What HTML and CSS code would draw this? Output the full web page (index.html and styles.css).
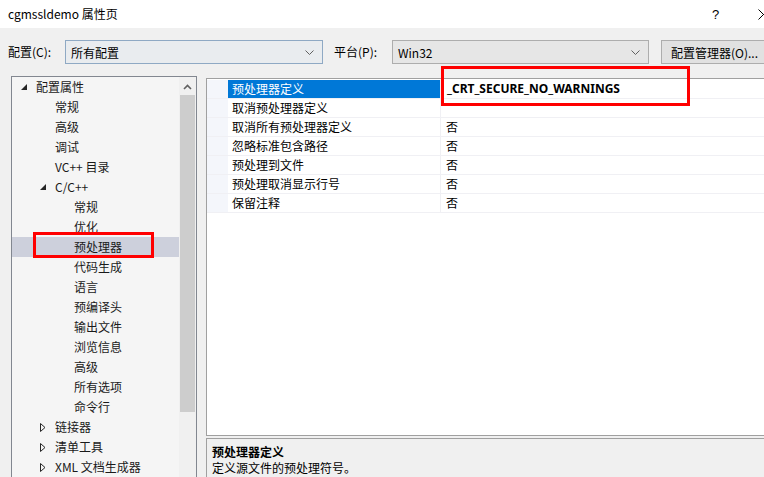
FILE: index.html
```html
<!DOCTYPE html>
<html>
<head>
  <meta charset="UTF-8">
  <title>cgmssldemo 属性页</title>
  <link rel="stylesheet" href="styles.css">
</head>
<body>
  <div class="dialog">
    <div class="titlebar">
      <span class="title">cgmssldemo 属性页</span>
      <span class="help">?</span>
      <svg class="close" width="11" height="11" viewBox="0 0 11 11"><path d="M0.5 0.5 L10.5 10.5 M10.5 0.5 L0.5 10.5" stroke="#000" stroke-width="1"/></svg>
    </div>

    <div class="toolbar">
      <span class="lbl lbl-config">配置(C):</span>
      <div class="combo combo-config">
        <span>所有配置</span>
        <svg class="chev" width="9" height="5" viewBox="0 0 9 5"><path d="M0.5 0.5 L4.5 4.5 L8.5 0.5" fill="none" stroke="#606060"/></svg>
      </div>
      <span class="lbl lbl-platform">平台(P):</span>
      <div class="combo combo-platform">
        <span>Win32</span>
        <svg class="chev" width="9" height="5" viewBox="0 0 9 5"><path d="M0.5 0.5 L4.5 4.5 L8.5 0.5" fill="none" stroke="#606060"/></svg>
      </div>
      <button class="btn">配置管理器(O)...</button>
    </div>

    <div class="main">
      <div class="tree">
        <div class="tree-list" id="treeList"></div>
        <div class="scrollbar">
          <svg class="scroll-up" width="9" height="6" viewBox="0 0 9 6"><path d="M1 5 L4.5 1.5 L8 5" fill="none" stroke="#606060" stroke-width="1.6"/></svg>
          <div class="thumb"></div>
        </div>
      </div>

      <div class="right">
        <div class="grid" id="propGrid"></div>
        <div class="desc">
          <div class="desc-title">预处理器定义</div>
          <div>定义源文件的预处理符号。</div>
        </div>
      </div>
    </div>

    <div class="mark mark-value"></div>
    <div class="mark mark-tree"></div>
  </div>

  <script>
    const treeItems = [
      { text: "配置属性", level: 0, exp: "open" },
      { text: "常规", level: 1 },
      { text: "高级", level: 1 },
      { text: "调试", level: 1 },
      { text: "VC++ 目录", level: 1 },
      { text: "C/C++", level: 1, exp: "open" },
      { text: "常规", level: 2 },
      { text: "优化", level: 2 },
      { text: "预处理器", level: 2, selected: true },
      { text: "代码生成", level: 2 },
      { text: "语言", level: 2 },
      { text: "预编译头", level: 2 },
      { text: "输出文件", level: 2 },
      { text: "浏览信息", level: 2 },
      { text: "高级", level: 2 },
      { text: "所有选项", level: 2 },
      { text: "命令行", level: 2 },
      { text: "链接器", level: 1, exp: "closed" },
      { text: "清单工具", level: 1, exp: "closed" },
      { text: "XML 文档生成器", level: 1, exp: "closed" }
    ];

    const openIcon = '<svg width="6" height="6" viewBox="0 0 6 6"><path d="M6 0 L6 6 L0 6 Z" fill="#262626"/></svg>';
    const closedIcon = '<svg width="6" height="9" viewBox="0 0 6 9"><path d="M0.5 0.5 L5 4.5 L0.5 8.5 Z" fill="none" stroke="#262626"/></svg>';

    document.getElementById("treeList").innerHTML = treeItems.map(item => {
      const icon = item.exp === "open" ? openIcon : item.exp === "closed" ? closedIcon : "";
      const cls = "tree-row lvl" + item.level + (item.selected ? " selected" : "");
      return `<div class="${cls}"><span class="exp">${icon}</span><span>${item.text}</span></div>`;
    }).join("");

    const props = [
      ["预处理器定义", "_CRT_SECURE_NO_WARNINGS"],
      ["取消预处理器定义", ""],
      ["取消所有预处理器定义", "否"],
      ["忽略标准包含路径", "否"],
      ["预处理到文件", "否"],
      ["预处理取消显示行号", "否"],
      ["保留注释", "否"]
    ];

    const dropBtn = '<span class="drop"><svg width="7" height="4" viewBox="0 0 7 4"><path d="M0.5 0.5 L3.5 3.5 L6.5 0.5" fill="none" stroke="#555"/></svg></span>';

    document.getElementById("propGrid").innerHTML = props.map((p, i) => {
      const first = i === 0;
      return `<div class="prop-row${first ? " active" : ""}">
        <span class="gutter"></span>
        <span class="name">${p[0]}</span>
        <span class="value">${first ? "<b>" + p[1] + "</b>" + dropBtn : p[1]}</span>
      </div>`;
    }).join("");
  </script>
</body>
</html>
```

FILE: styles.css
```css
body {
  margin: 0;
  background: #f0f0f0;
  overflow: hidden;
  font-family: "Noto Sans CJK SC", "Noto Sans", sans-serif;
  font-size: 12px;
  color: #000;
}
.dialog {
  position: relative;
  width: 790px;
  height: 477px;
  display: flex;
  flex-direction: column;
}
.titlebar {
  height: 28px;
  background: #fff;
  display: flex;
  align-items: center;
  padding-left: 8px;
  flex-shrink: 0;
}
.title {
  flex: 1;
  line-height: 16px;
}
.help {
  font-family: "Liberation Sans", sans-serif;
  font-size: 13px;
  width: 42px;
  margin-right: 4px;
}
.close {
  margin-right: 21px;
}

.toolbar {
  height: 48px;
  display: flex;
  align-items: center;
  padding-left: 8px;
  flex-shrink: 0;
}
.lbl {
  line-height: 16px;
}
.lbl-config {
  width: 57px;
}
.lbl-platform {
  width: 58px;
  margin-left: 11px;
}
.combo {
  height: 24px;
  box-sizing: border-box;
  display: flex;
  align-items: center;
  padding: 0 8px 0 5px;
}
.combo span {
  flex: 1;
}
.combo-config {
  width: 258px;
  background: #e9ecef;
  border: 1px solid #8fa9c4;
}
.combo-platform {
  width: 257px;
  background: #e6e6e6;
  border: 1px solid #adadad;
}
.btn {
  margin-left: 12px;
  width: 122px;
  height: 24px;
  background: #e1e1e1;
  border: 1px solid #adadad;
  font-family: inherit;
  font-size: 12px;
  text-align: left;
  padding: 0 0 0 9px;
  color: #000;
}

.main {
  flex: 1;
  display: flex;
  gap: 9px;
  padding-left: 11px;
  min-height: 0;
}
.tree {
  width: 186px;
  box-sizing: border-box;
  border: 1px solid #828790;
  border-bottom: none;
  background: #f5f5f5;
  display: flex;
}
.tree-list {
  flex: 1;
}
.tree-row {
  height: 20px;
  display: flex;
  align-items: center;
  line-height: 16px;
  color: #1a1a1a;
}
.tree-row.lvl0 { padding-left: 6px; }
.tree-row.lvl1 { padding-left: 25px; }
.tree-row.lvl2 { padding-left: 44px; }
.tree-row.selected {
  background: #cdd0dc;
}
.exp {
  width: 18px;
  flex-shrink: 0;
  display: flex;
  align-items: center;
  padding-left: 3px;
  box-sizing: border-box;
}
.scrollbar {
  width: 17px;
  background: #f0f0f0;
  display: flex;
  flex-direction: column;
  align-items: center;
}
.scroll-up {
  margin-top: 7px;
}
.thumb {
  width: 15px;
  height: 317px;
  margin-top: 5px;
  background: #cdcdcd;
}

.right {
  flex: 1;
  display: flex;
  flex-direction: column;
  padding-top: 2px;
}
.grid {
  height: 358px;
  box-sizing: border-box;
  border: 1px solid #a0a0a0;
  padding-top: 1px;
  background: #fff;
}
.prop-row {
  height: 19px;
  display: grid;
  grid-template-columns: 21px 213px 1fr;
  box-sizing: border-box;
  border-bottom: 1px solid #f0f0f4;
  line-height: 16px;
}
.gutter {
  background: #f4f6fb;
}
.name {
  padding-left: 4px;
  display: flex;
  align-items: center;
  border-right: 1px solid #f0f0f4;
}
.prop-row.active .name {
  background: #0078d7;
  color: #fff;
}
.value {
  padding-left: 5px;
  display: flex;
  align-items: center;
}
.prop-row.active .value {
  padding-left: 6px;
  justify-content: space-between;
}
.value b {
  font-family: "Noto Sans", sans-serif;
  font-weight: 700;
}
.drop {
  width: 17px;
  height: 17px;
  box-sizing: border-box;
  border: 1px solid #acacac;
  background: #e8e8e8;
  display: flex;
  align-items: center;
  justify-content: center;
  margin-right: 5px;
}
.desc {
  margin-top: 2px;
  flex: 1;
  border-top: 1px solid #a0a0a0;
  border-left: 1px solid #a0a0a0;
  padding: 5px 5px 0;
  line-height: 16px;
}
.desc-title {
  font-weight: 700;
}

.mark {
  position: absolute;
  border: 3px solid #f00;
  box-sizing: border-box;
}
.mark-value {
  left: 441px;
  top: 66px;
  width: 249px;
  height: 40px;
}
.mark-tree {
  left: 33px;
  top: 232px;
  width: 121px;
  height: 26px;
}
```
